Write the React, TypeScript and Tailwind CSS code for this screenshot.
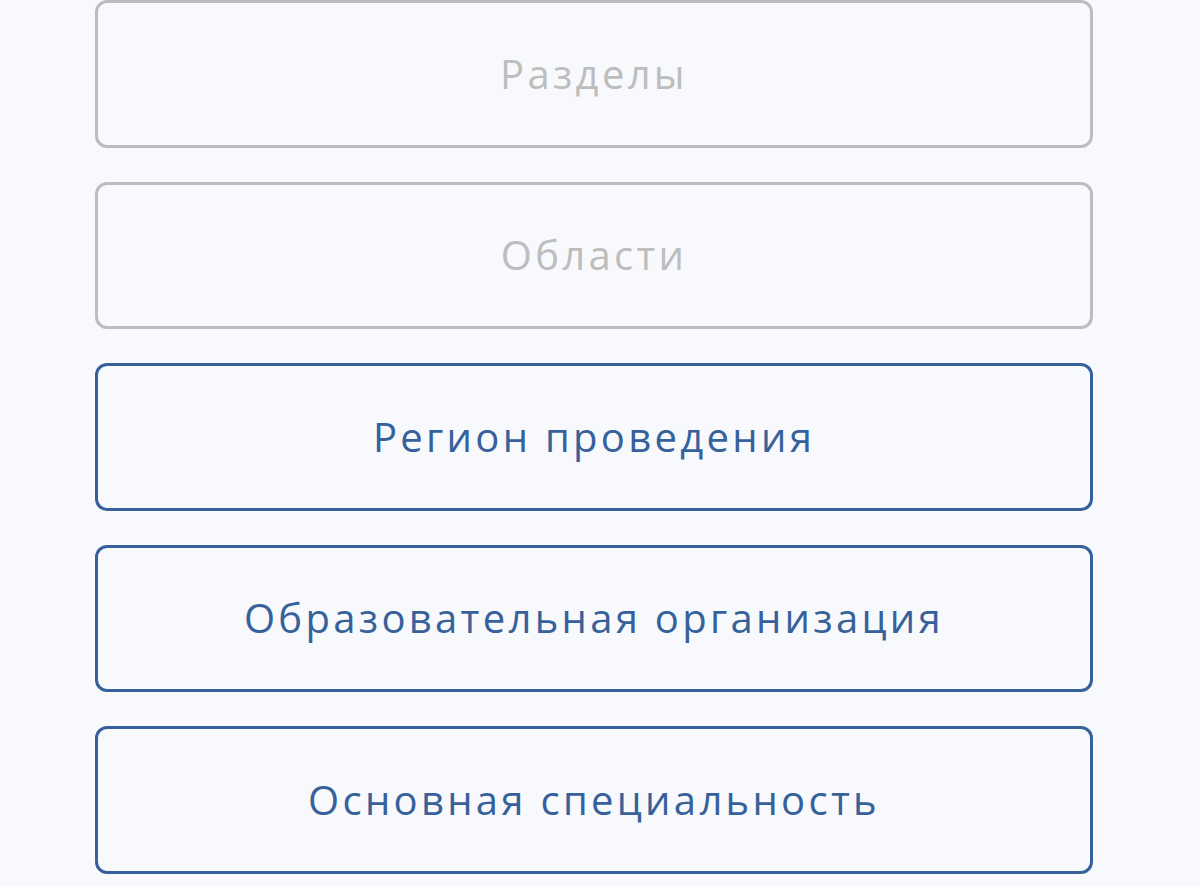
import React from "react";

const items = [
  { label: "Разделы", active: false },
  { label: "Области", active: false },
  { label: "Регион проведения", active: true },
  { label: "Образовательная организация", active: true },
  { label: "Основная специальность", active: true },
];

const App = () => {
  return (
    <div className="min-h-[886px] bg-[#f7f9fc] font-['Open_Sans',sans-serif]">
      <div className="flex flex-col gap-[34px] pl-[95px] w-[1093px]">
        {items.map((item) => (
          <button
            key={item.label}
            type="button"
            className={
              item.active
                ? "h-[147.5px] w-full flex items-center justify-center rounded-[12px] border-[3px] border-[#36619a] bg-transparent text-[40px] tracking-[3.3px] text-[#36619a]"
                : "h-[147.5px] w-full flex items-center justify-center rounded-[12px] border-[3px] border-[#bdbdbd] bg-transparent text-[40px] tracking-[3.3px] text-[#bdbdbd]"
            }
          >
            {item.label}
          </button>
        ))}
      </div>
    </div>
  );
};

export default App;
